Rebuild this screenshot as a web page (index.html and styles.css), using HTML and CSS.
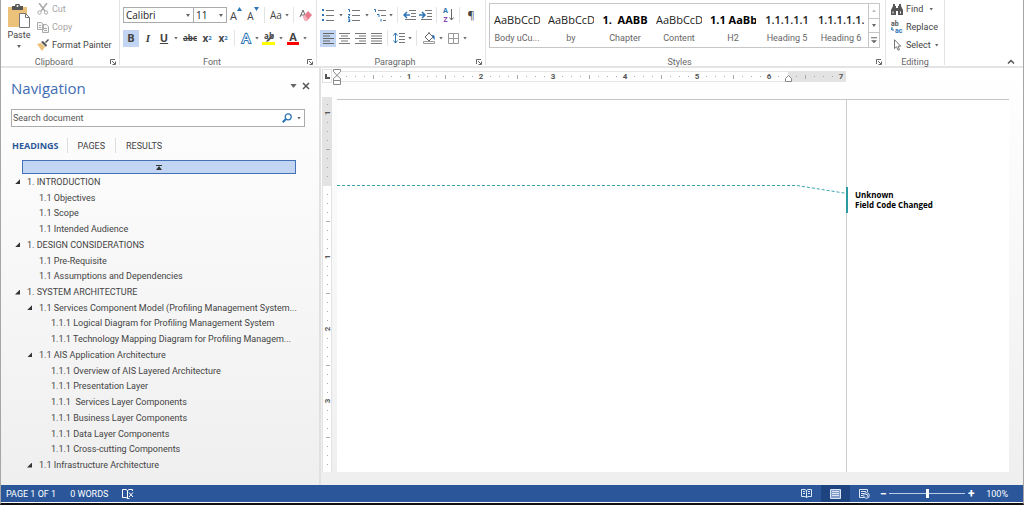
FILE: index.html
```html
<!DOCTYPE html>
<html lang="en">
<head>
    <meta charset="UTF-8">
    <meta name="viewport" content="width=device-width, initial-scale=1.0">
    <title>Document - Word</title>
    <link rel="stylesheet" href="styles.css">
</head>
<body>
    <svg class="defs" aria-hidden="true">
        <symbol id="launcher" viewBox="0 0 6 6">
            <path d="M.5 5V.5H5M2 2l3 3M5.5 2.500v3h-3" fill="none" stroke="#666"/>
        </symbol>
    </svg>

    <!-- Ribbon -->
    <header class="ribbon">
        <section class="group clipboard">
            <div class="group-body">
                <button class="paste">
                    <svg width="24" height="25" viewBox="0 0 24 25">
                        <path d="M1 3h19v20H1z" fill="#ecc27a"/>
                        <path d="M5 2h3a2.500 2.500 0 0 1 5 0h3v4H5z" fill="#555"/>
                        <circle cx="10.500" cy="2" r="1" fill="#fff"/>
                        <path d="M12.500 9.500h6l4 4v10h-10z" fill="#fff" stroke="#777"/>
                        <path d="M18.500 9.500v4h4" fill="none" stroke="#777"/>
                    </svg>
                    <span>Paste</span>
                    <i class="caret"></i>
                </button>
                <div class="stack">
                    <button class="disabled">
                        <svg width="12" height="12" viewBox="0 0 12 12" fill="none" stroke="#aaa">
                            <path d="M2 0l6 8M10 0L4 8" stroke-width="1.500"/>
                            <circle cx="2.500" cy="9.500" r="1.700"/><circle cx="9" cy="9.500" r="1.700"/>
                        </svg>Cut
                    </button>
                    <button class="disabled">
                        <svg width="12" height="12" viewBox="0 0 12 12" fill="#f6f6f6" stroke="#aaa">
                            <path d="M.5 1.500h4l2 2v5h-6zM5.500 3.500h4l2 2v6h-6z"/>
                            <path d="M2 4.500h2M2 6.500h2M7 7.500h3M7 9.500h3"/>
                        </svg>Copy
                    </button>
                    <button>
                        <svg width="12" height="12" viewBox="0 0 12 12">
                            <path d="M0 5l4-1 4 4-3 4z" fill="#ecc27a"/>
                            <path d="M4 3l2-1 4 4-1 2zM8 3l3-3 1 1-3 3z" fill="#555"/>
                        </svg>Format Painter
                    </button>
                </div>
            </div>
            <footer>Clipboard<svg class="launch"><use href="#launcher"/></svg></footer>
        </section>

        <section class="group font">
            <div class="group-body rows">
                <div class="row">
                    <label class="combo combo-name"><select aria-label="Font"><option>Calibri</option></select><i class="caret"></i></label>
                    <label class="combo combo-size"><select aria-label="Font size"><option>11</option></select><i class="caret"></i></label>
                    <button class="tool w18 grow">A<svg width="5" height="4"><path d="M0 4l2.500-4L5 4z" fill="#2e75b6"/></svg></button>
                    <button class="tool w16 shrink">A<svg width="5" height="4"><path d="M0 0h5L2.500 4z" fill="#2e75b6"/></svg></button>
                    <i class="sep"></i>
                    <button class="tool w16 case">Aa</button><i class="caret"></i>
                    <i class="sep"></i>
                    <button class="tool w16" aria-label="Clear formatting">
                        <svg width="13" height="12" viewBox="0 0 13 12">
                            <path d="M1 8l3-7 2 5M2 6h3" fill="none" stroke="#666"/>
                            <path d="M4 8l5-6 4 4-5 6H6z" fill="#e8788a"/><path d="M4 8l2-2 3 4-1 2H6z" fill="#f3b2bc"/>
                        </svg>
                    </button>
                </div>
                <div class="row">
                    <button class="tool w16 on"><b>B</b></button>
                    <button class="tool w18 italic">I</button>
                    <button class="tool w14 underline">U</button><i class="caret wide"></i>
                    <button class="tool w18 strike">abc</button>
                    <button class="tool w16 script">x<sub>2</sub></button>
                    <button class="tool w16 script">x<sup>2</sup></button>
                    <i class="sep"></i>
                    <button class="tool w16 effects">A</button><i class="caret"></i>
                    <button class="tool w18 mark">ab
                        <svg width="13" height="12" viewBox="0 0 13 12"><path d="M5 7l6-6 1 1-5 6-3 1z" fill="#555"/><path d="M0 9h13v3H0z" fill="#ff0"/></svg>
                    </button><i class="caret"></i>
                    <button class="tool w18 colour">A</button><i class="caret"></i>
                </div>
            </div>
            <footer>Font<svg class="launch"><use href="#launcher"/></svg></footer>
        </section>

        <section class="group paragraph">
            <div class="group-body rows">
                <div class="row">
                    <button class="tool w16" aria-label="Bullets"><svg width="12" height="12"><path d="M0 0h2v2H0zM0 5h2v2H0zM0 10h2v2H0z" fill="#2e75b6"/><path d="M4 1.500h8M4 6.500h8M4 11.500h8" stroke="#777"/></svg></button><i class="caret wide"></i>
                    <button class="tool w16" aria-label="Numbering"><svg width="12" height="13"><path d="M0 .5h1.500V3M0 5.500h2L0 8.500h2M0 10h2L1 11.500h1v1H0" fill="none" stroke="#2e75b6"/><path d="M4 1.500h8M4 6.500h8M4 11.500h8" stroke="#777"/></svg></button><i class="caret wide"></i>
                    <button class="tool w16" aria-label="Multilevel list"><svg width="13" height="13"><path d="M0 .5h1.500V3M3 5.500h2V8M7 10v2.500" fill="none" stroke="#2e75b6"/><path d="M4 1.500h8M7 6.500h5M9 11.500h3" stroke="#777"/></svg></button><i class="caret"></i>
                    <i class="sep"></i>
                    <button class="tool w16" aria-label="Decrease indent"><svg width="13" height="10"><path d="M6 .5h7M8 3.500h5M8 6.500h5M2 9.500h11" stroke="#777"/><path d="M7 5H1M4 2L1 5l3 3" fill="none" stroke="#2e75b6" stroke-width="1.500"/></svg></button>
                    <button class="tool w16" aria-label="Increase indent"><svg width="13" height="10"><path d="M6 .5h7M8 3.500h5M8 6.500h5M2 9.500h11" stroke="#777"/><path d="M0 5h6M3 2l3 3-3 3" fill="none" stroke="#2e75b6" stroke-width="1.500"/></svg></button>
                    <i class="sep"></i>
                    <button class="tool w16 sort"><span>A</span><span>Z</span><svg width="5" height="12"><path d="M2.500 0v11M.5 8.500l2 2.500 2-2.500" fill="none" stroke="#666"/></svg></button>
                    <i class="sep"></i>
                    <button class="tool w16 pilcrow">¶</button>
                </div>
                <div class="row">
                    <button class="tool w16 on" aria-label="Align left"><svg width="11" height="11"><path d="M0 .5h11M0 3h7M0 5.500h11M0 8h7M0 10.500h11" stroke="#666"/></svg></button>
                    <button class="tool w16" aria-label="Center"><svg width="11" height="11"><path d="M0 .5h11M2 3h7M0 5.500h11M2 8h7M0 10.500h11" stroke="#777"/></svg></button>
                    <button class="tool w16" aria-label="Align right"><svg width="11" height="11"><path d="M0 .5h11M4 3h7M0 5.500h11M4 8h7M0 10.500h11" stroke="#777"/></svg></button>
                    <button class="tool w16" aria-label="Justify"><svg width="11" height="11"><path d="M0 .5h11M0 3h11M0 5.500h11M0 8h11M0 10.500h11" stroke="#777"/></svg></button>
                    <i class="sep"></i>
                    <button class="tool w16" aria-label="Line spacing"><svg width="12" height="12"><path d="M2.500 1v10M.5 3.500l2-2.500 2 2.500M.5 8.500l2 2.500 2-2.500" fill="none" stroke="#2e75b6"/><path d="M6 1.500h6M6 4.500h6M6 7.500h6M6 10.500h6" stroke="#777"/></svg></button><i class="caret"></i>
                    <i class="sep"></i>
                    <button class="tool w18" aria-label="Shading"><svg width="13" height="12"><path d="M2 5l4-4 4 4-4 4zM6 1V0" fill="#fff" stroke="#666"/><path d="M9 3c3 0 3 2 2.500 5C10 7 10 5 9 3z" fill="#2e75b6"/><path d="M.5 9.500h11v2H.5z" fill="#fff" stroke="#999"/></svg></button><i class="caret"></i>
                    <button class="tool w18" aria-label="Borders"><svg width="11" height="11"><path d="M.5.5h10v10H.5zM5.500 0v11M0 5.500h11" fill="none" stroke="#999"/></svg></button><i class="caret"></i>
                </div>
            </div>
            <footer>Paragraph<svg class="launch"><use href="#launcher"/></svg></footer>
        </section>

        <section class="group styles">
            <div class="group-body">
                <div class="gallery">
                    <button class="style"><span class="sample">AaBbCcD</span><span>Body uCu...</span></button>
                    <button class="style"><span class="sample">AaBbCcD</span><span>by</span></button>
                    <button class="style"><span class="sample heavy">1.&nbsp; AABB</span><span>Chapter</span></button>
                    <button class="style"><span class="sample">AaBbCcDc</span><span>Content</span></button>
                    <button class="style"><span class="sample heavy">1.1 AaBb</span><span>H2</span></button>
                    <button class="style"><span class="sample medium">1.1.1.1.1</span><span>Heading 5</span></button>
                    <button class="style"><span class="sample medium">1.1.1.1.1.</span><span>Heading 6</span></button>
                    <div class="scroller">
                        <button aria-label="Previous styles"><i class="caret up"></i></button>
                        <button aria-label="Next styles"><i class="caret"></i></button>
                        <button aria-label="More styles"><i class="caret more"></i></button>
                    </div>
                </div>
            </div>
            <footer>Styles<svg class="launch"><use href="#launcher"/></svg></footer>
        </section>

        <section class="group editing">
            <div class="group-body">
                <div class="stack">
                    <button>
                        <svg width="12" height="11" viewBox="0 0 12 11" fill="#555"><path d="M2 0h2v2h1v2h2V2h1V0h2v2l2 4v5H7V7H5v4H0V6l2-4z"/><path d="M1.500 7.500h1v2h-1zM9 7.500h1v2H9z" fill="#fff"/></svg>Find<i class="caret wide"></i>
                    </button>
                    <button class="replace">
                        <svg width="12" height="14" viewBox="0 0 12 14"><text x="0" y="6">ab</text><text x="4" y="13" class="blue">ac</text><path d="M1 7v3h2M0 8l1 2" fill="none" stroke="#2e75b6"/></svg>Replace
                    </button>
                    <button>
                        <svg width="12" height="12" viewBox="0 0 12 12"><path d="M3.500.7v9l2-2 1.500 3.500 1.500-.6L7 7.200h2.700z" fill="#fff" stroke="#777"/></svg>Select<i class="caret"></i>
                    </button>
                </div>
            </div>
            <footer>Editing</footer>
        </section>
        <button class="collapse" aria-label="Collapse the ribbon"><svg width="8" height="5"><path d="M1 4.500l3-3 3 3" fill="none" stroke="#555" stroke-width="1.500"/></svg></button>
    </header>

    <div class="workspace">
        <!-- Navigation pane -->
        <aside class="nav">
            <div class="nav-head">
                <h1>Navigation</h1>
                <button aria-label="Pane options"><i class="caret big"></i></button>
                <button aria-label="Close"><svg width="8" height="8"><path d="M1 1l6 6M7 1L1 7" stroke="#555" stroke-width="1.500"/></svg></button>
            </div>
            <div class="search">
                <input type="text" placeholder="Search document" aria-label="Search document">
                <svg width="10" height="10"><circle cx="6.200" cy="3.800" r="3" fill="none" stroke="#2e75b6" stroke-width="1.300"/><path d="M4 6L.7 9.300" stroke="#2e75b6" stroke-width="2"/></svg>
                <i class="caret"></i>
            </div>
            <div class="tabs">
                <button class="active">HEADINGS</button>
                <button>PAGES</button>
                <button>RESULTS</button>
            </div>
            <button class="jump-top" aria-label="Jump to the beginning"><svg width="6" height="5"><path d="M0 .5h6" stroke="#333"/><path d="M3 1l3 4H0z" fill="#333"/></svg></button>
            <ul class="tree">
                <li class="l1 open">1. INTRODUCTION</li>
                <li class="l2">1.1 Objectives</li>
                <li class="l2">1.1 Scope</li>
                <li class="l2">1.1 Intended Audience</li>
                <li class="l1 open">1. DESIGN CONSIDERATIONS</li>
                <li class="l2">1.1 Pre-Requisite</li>
                <li class="l2">1.1 Assumptions and Dependencies</li>
                <li class="l1 open">1. SYSTEM ARCHITECTURE</li>
                <li class="l2 open">1.1 Services Component Model (Profiling Management System...</li>
                <li class="l3">1.1.1 Logical Diagram for Profiling Management System</li>
                <li class="l3">1.1.1 Technology Mapping Diagram for Profiling Managem...</li>
                <li class="l2 open">1.1 AIS Application Architecture</li>
                <li class="l3">1.1.1 Overview of AIS Layered Architecture</li>
                <li class="l3">1.1.1 Presentation Layer</li>
                <li class="l3">1.1.1&nbsp; Services Layer Components</li>
                <li class="l3">1.1.1 Business Layer Components</li>
                <li class="l3">1.1.1 Data Layer Components</li>
                <li class="l3">1.1.1 Cross-cutting Components</li>
                <li class="l2 open">1.1 Infrastructure Architecture</li>
            </ul>
        </aside>

        <!-- Document area -->
        <main class="document">
            <div class="ruler-top">
                <button class="tab-stop" aria-label="Left tab"><svg width="5" height="5"><path d="M1 0v4h4" fill="none" stroke="#555" stroke-width="2"/></svg></button>
                <svg class="ruler-h" width="520" height="18">
                    <defs>
                        <pattern id="inch-h" x="5" y="0" width="72" height="18" patternUnits="userSpaceOnUse">
                            <path d="M9 7.500h1M18 7.500h1M27 7.500h1M45 7.500h1M54 7.500h1M63 7.500h1M36.500 6v4" stroke="#aaa"/>
                        </pattern>
                    </defs>
                    <path d="M5 3h451v9H5z" fill="#fff"/>
                    <path d="M5 2.500h451M5 12.500h451" stroke="#e6e6e6"/>
                    <path d="M456 2h58v11h-58z" fill="#e3e3e3"/>
                    <path d="M5 2h509v11H5z" fill="url(#inch-h)"/>
                    <g class="marks">
                        <text x="77" y="10">1</text><text x="149" y="10">2</text><text x="221" y="10">3</text>
                        <text x="293" y="10">4</text><text x="365" y="10">5</text><text x="437" y="10">6</text>
                        <text x="509" y="10">7</text>
                    </g>
                    <g fill="#fff" stroke="#888">
                        <path d="M1.500.5h7v2L5 6.500l3.500 3v2h-7v-2l3.500-3-3.500-4zM1.500 11.500h7v4h-7z"/>
                        <path d="M453.500 12.500v-3l3-3 3 3v3z"/>
                    </g>
                </svg>
            </div>
            <div class="canvas">
                <svg class="ruler-v" width="10">
                    <defs>
                        <pattern id="inch-v" x="0" y="16" width="10" height="72" patternUnits="userSpaceOnUse">
                            <path d="M5 9.500h1M5 18.500h1M5 27.500h1M5 45.500h1M5 54.500h1M5 63.500h1M4 36.500h4" stroke="#aaa"/>
                        </pattern>
                    </defs>
                    <rect width="10" height="100%" fill="#e3e3e3"/>
                    <rect x="1" y="89" width="8" height="100%" fill="#fff"/>
                    <rect width="10" height="100%" fill="url(#inch-v)"/>
                    <g class="marks">
                        <text transform="translate(8 16) rotate(-90)">1</text>
                        <text transform="translate(8 160) rotate(-90)">1</text>
                        <text transform="translate(8 232) rotate(-90)">2</text>
                        <text transform="translate(8 304) rotate(-90)">3</text>
                    </g>
                </svg>
                <div class="page">
                    <div class="text-area">
                        <svg class="leader" width="510" height="20"><path d="M0 5.500h460l50 8" fill="none" stroke="#3aa5ad" stroke-dasharray="3 2"/></svg>
                    </div>
                    <div class="markup">
                        <p class="balloon">Unknown<br>Field Code Changed</p>
                    </div>
                </div>
            </div>
        </main>
    </div>

    <!-- Status bar -->
    <footer class="status">
        <span>PAGE 1 OF 1</span>
        <span>0 WORDS</span>
        <svg width="12" height="10" fill="none" stroke="#fff"><path d="M5.500 1.500L4 .5H.5v8H4l1.500 1zM5.500 1.500L7 .5h3.500V2M5.500 9.500h2M7 3.500l4 4.500M11 3.500L7 8"/></svg>
        <div class="views">
            <button aria-label="Read mode"><svg width="11" height="9" stroke="#dbe5f3" fill="none"><path d="M5.500 1.500L4 .5H.5v7H4l1.500 1L7 7.500h3.500v-7H7zM5.500 1v8M2 2.500h2M2 4.500h2M7 2.500h2M7 4.500h2"/></svg></button>
            <button class="current" aria-label="Print layout"><svg width="11" height="10" stroke="#dbe5f3" fill="#7f9cc8"><path d="M.5.5h10v9H.5zM2 2.500h7M2 4.500h7M2 6.500h7"/></svg></button>
            <button aria-label="Web layout"><svg width="11" height="10" stroke="#dbe5f3" fill="none"><path d="M5 8.500H.5v-8h8V3M2 2.500h5M2 4.500h3M2 6.500h2"/><circle cx="7.500" cy="6.500" r="2.800" fill="#2b579a"/><path d="M6 5l3 1-1 2"/></svg></button>
        </div>
        <div class="zoom-bar">
            <button class="step" aria-label="Zoom out">−</button>
            <input class="zoom" type="range" min="0" max="100" value="50" aria-label="Zoom">
            <button class="step" aria-label="Zoom in">+</button>
        </div>
        <span>100%</span>
    </footer>
</body>
</html>
```
FILE: styles.css
```css
* {
    box-sizing: border-box;
}
body {
    margin: 0;
    height: 100vh;
    display: flex;
    flex-direction: column;
    overflow: hidden;
    font-family: Roboto, "Open Sans", sans-serif;
    font-size: 9px;
    line-height: 12px;
    color: #444;
    background: #fff;
    border-left: 1px solid #a6a6a6;
    border-right: 1px solid #a6a6a6;
    border-bottom: 2px solid #111;
}
h1,
.tool,
.combo,
.sample,
.active,
.balloon {
    font-family: "Open Sans", "Noto Sans", sans-serif;
}
button {
    font: inherit;
    color: inherit;
    background: none;
    border: none;
    padding: 0;
    display: flex;
    align-items: center;
    justify-content: center;
}
svg {
    flex: none;
}
.defs {
    display: none;
}
.caret {
    flex: none;
    width: 6px;
    height: 3px;
    background: #666;
    clip-path: polygon(1px 0, 5px 0, 3px 3px);
}
.caret.wide {
    margin: 0 2px;
}
.caret.up {
    background: #bbb;
    clip-path: polygon(3px 0, 5px 3px, 1px 3px);
}
.caret.more {
    height: 6px;
    clip-path: polygon(0 0, 6px 0, 6px 1px, 0 1px, 0 3px, 6px 3px, 3px 6px, 0 3px);
}
.caret.big {
    width: 7px;
    height: 4px;
    clip-path: polygon(0 0, 7px 0, 4px 4px, 3px 4px);
}

/* ribbon */
.ribbon {
    display: flex;
    height: 68px;
    border-bottom: 2px solid #e4e4e4;
}
.group {
    display: flex;
    flex-direction: column;
    position: relative;
    border-right: 1px solid #e4e4e4;
    margin-bottom: 1px;
}
.group footer {
    text-align: center;
    color: #666;
    padding-right: 12px;
}
.styles footer,
.editing footer {
    padding: 0 12px 0 0;
}
.editing footer {
    padding: 0;
}
.group-body {
    flex: none;
    display: flex;
    height: 52px;
    margin-bottom: 4px;
}
.launch {
    position: absolute;
    right: 3px;
    bottom: 0;
    width: 6px;
    height: 6px;
}
.clipboard {
    width: 119px;
}
.font {
    width: 197px;
}
.paragraph {
    width: 169px;
}
.styles {
    width: 400px;
}
.editing {
    width: 59px;
}
.paste {
    flex-direction: column;
    justify-content: flex-start;
    width: 36px;
    padding-top: 4px;
}
.paste .caret {
    margin-top: 4px;
}
.stack button {
    height: 18px;
    gap: 3px;
}
.disabled {
    color: #a6a6a6;
}
.rows {
    flex-direction: column;
    gap: 7px;
    padding: 7px 0 0 3px;
}
.row {
    display: flex;
    align-items: center;
    height: 16px;
}
.combo {
    position: relative;
    height: 16px;
    border: 1px solid #ababab;
}
.combo + .combo {
    border-left: none;
}
.combo-name {
    width: 71px;
}
.combo-size {
    width: 33px;
}
.combo select {
    appearance: none;
    width: 100%;
    height: 14px;
    border: none;
    background: none;
    padding: 0 2px;
    font: inherit;
    font-size: 10px;
    color: #222;
}
.combo .caret {
    position: absolute;
    right: 2px;
    top: 6px;
}
.tool {
    flex: none;
    height: 17px;
    font-size: 11px;
}
.w14 {
    width: 14px;
}
.w16 {
    width: 16px;
}
.w18 {
    width: 18px;
}
.on {
    background: #c2d5f2;
}
.sep {
    width: 1px;
    height: 16px;
    margin: 0 3px;
    background: #e4e4e4;
}
.paragraph .sep {
    margin: 0 3px;
}
.grow,
.shrink {
    align-items: flex-start;
    font-size: 11px;
    line-height: 18px;
}
.shrink {
    font-size: 10px;
}
.case {
    font-size: 10px;
}
.italic {
    font-family: "Liberation Serif", serif;
    font-style: italic;
    font-weight: bold;
}
.underline {
    text-decoration: underline;
    font-weight: bold;
}
.strike {
    font-size: 8px;
    font-weight: bold;
    text-decoration: line-through;
}
.script {
    font-size: 10px;
    font-weight: bold;
}
.script sub,
.script sup {
    font-size: 6px;
    color: #2e75b6;
}
.effects {
    font-size: 13px;
    color: #fff;
    -webkit-text-stroke: 2px #2e75b6;
    paint-order: stroke fill;
}
.mark {
    position: relative;
    align-items: flex-start;
    font-size: 8px;
    font-weight: bold;
}
.mark svg {
    position: absolute;
    left: 2px;
    top: 3px;
}
.colour {
    font-weight: bold;
    line-height: 11px;
    height: 14px;
    border-bottom: 3px solid #f00;
    width: 12px;
    margin: 0 3px;
}
.sort {
    display: grid;
    grid-template-columns: 7px 5px;
    font-size: 7px;
    line-height: 7px;
    font-weight: bold;
    color: #2e75b6;
}
.sort span + span {
    grid-row: 2;
    color: #8e44ad;
}
.sort svg {
    grid-row: 1 / 3;
    grid-column: 2;
}
.gallery {
    display: flex;
    width: 391px;
    height: 45px;
    margin: 3px 0 0 3px;
    border: 1px solid #c6c6c6;
}
.style {
    width: 54px;
    flex-direction: column;
    overflow: hidden;
    gap: 6px;
    padding-top: 5px;
    color: #666;
}
.sample {
    width: 46px;
    overflow: hidden;
    white-space: nowrap;
    font-size: 11px;
    line-height: 13px;
    color: #222;
}
.heavy {
    font-weight: bold;
    color: #000;
}
.medium {
    font-weight: 600;
}
.scroller {
    flex: 1;
    display: flex;
    flex-direction: column;
    border-left: 1px solid #c6c6c6;
}
.scroller button {
    flex: 1;
}
.scroller button + button {
    border-top: 1px solid #c6c6c6;
}
.editing .stack {
    padding-left: 5px;
}
.replace text {
    font-size: 7px;
    font-weight: bold;
    fill: #555;
}
.replace .blue {
    fill: #2e75b6;
}
.collapse {
    margin: 57px 8px 0 auto;
    height: 8px;
}

/* workspace */
.workspace {
    flex: 1;
    min-height: 0;
    display: flex;
    background: linear-gradient(#fff, #efefef);
}
.nav {
    flex: none;
    width: 320px;
    display: flex;
    flex-direction: column;
    padding: 8px 14px 12px 10px;
    border-right: 2px solid #e1e1e1;
}
.nav-head {
    display: flex;
    align-items: center;
    height: 24px;
    gap: 5px;
    margin-right: -5px;
}
.nav-head button {
    margin-bottom: 5px;
}
h1 {
    flex: 1;
    margin: 0;
    font-size: 15px;
    font-weight: normal;
    color: #3e6db5;
}
.search {
    display: flex;
    align-items: center;
    gap: 4px;
    height: 18px;
    margin-top: 9px;
    padding-right: 2px;
    background: #fff;
    border: 1px solid #ababab;
}
.search input {
    flex: 1;
    min-width: 0;
    border: none;
    background: none;
    padding: 0 1px;
    font: inherit;
}
.search input::placeholder {
    color: #555;
}
.tabs {
    display: flex;
    margin-top: 11px;
    height: 15px;
}
.tabs button {
    padding: 0 10px;
    border-right: 1px solid #ddd;
}
.tabs button:last-child {
    border: none;
}
.tabs .active {
    padding: 0 8px 0 1px;
    font-weight: bold;
    color: #2b579a;
}
.jump-top {
    flex: none;
    height: 14px;
    margin: 7px 9px 0 11px;
    background: #c2d5f2;
    border: 1px solid #4472b8;
}
.tree {
    flex: 1;
    display: flex;
    flex-direction: column;
    margin: 0;
    padding: 0;
    list-style: none;
}
.tree li {
    flex: 1;
    display: flex;
    align-items: center;
    white-space: nowrap;
}
.open::before {
    content: "";
    flex: none;
    width: 5px;
    height: 5px;
    margin-right: 7px;
    margin-left: -12px;
    background: #333;
    clip-path: polygon(100% 0, 100% 100%, 0 100%);
}
.l1 {
    padding-left: 16px;
}
.l2 {
    padding-left: 28px;
}
.l3 {
    padding-left: 40px;
}

/* document */
.document {
    flex: 1;
    min-width: 0;
    display: flex;
    flex-direction: column;
    padding: 1px 14px 13px 1px;
}
.ruler-top {
    display: flex;
    height: 18px;
}
.tab-stop {
    width: 10px;
    height: 14px;
    background: #fff;
    border: 1px solid #e1e1e1;
}
.marks {
    font-size: 8px;
    font-weight: bold;
    fill: #555;
    text-anchor: middle;
}
.canvas {
    flex: 1;
    min-height: 0;
    display: flex;
    gap: 5px;
    margin-top: 10px;
}
.ruler-v {
    height: 100%;
}
.page {
    flex: 1;
    display: flex;
    margin-top: 2px;
    background: #fff;
    border-top: 1px solid #c6c6c6;
}
.text-area {
    width: 510px;
    padding-top: 80px;
    border-right: 1px solid #ccc;
}
.markup {
    flex: 1;
    padding-top: 87px;
}
.balloon {
    margin: 0 0 0 -1px;
    padding: 3px 0 3px 7px;
    border-left: 2px solid #2b9aa3;
    font-size: 8px;
    line-height: 10px;
    font-weight: bold;
    color: #000;
}

/* status bar */
.status {
    display: flex;
    align-items: center;
    height: 17px;
    margin-bottom: 1px;
    padding: 0 15px 0 5px;
    gap: 14px;
    background: #2b579a;
    color: #fff;
}
.views {
    display: flex;
    margin-left: auto;
}
.views button {
    width: 29px;
    height: 17px;
}
.views .current {
    background: #1d4480;
}
.zoom-bar {
    display: flex;
    align-items: center;
    gap: 2px;
    margin: 0 -3px 0 -14px;
}
.step {
    width: 8px;
    font-size: 12px;
    font-weight: bold;
}
.zoom {
    appearance: none;
    width: 76px;
    height: 9px;
    margin: 0;
    background: linear-gradient(#b9cbe6, #b9cbe6) center / 100% 1px no-repeat;
}
.zoom::-webkit-slider-thumb {
    appearance: none;
    width: 3px;
    height: 9px;
    background: #fff;
}
```
